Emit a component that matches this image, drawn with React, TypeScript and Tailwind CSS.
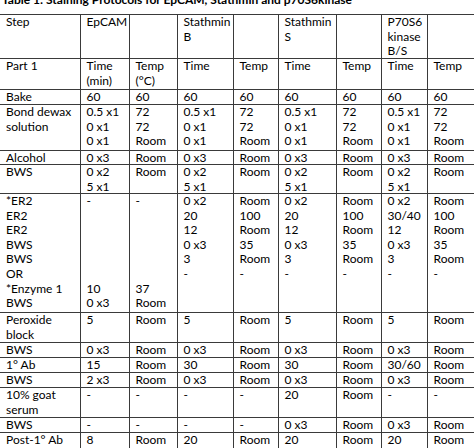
import React from "react";

type Cell = string | string[];
type Row = { h: string; cells: Cell[] };

// h = inner height of the row (row pitch minus the 1px rule)
const rows: Row[] = [
  {
    h: "h-[43px]",
    cells: ["Step", "EpCAM", "", ["Stathmin", "B"], "", ["Stathmin", "S"], "", ["P70S6", "kinase", "B/S"], ""],
  },
  {
    h: "h-[30px]",
    cells: ["Part 1", ["Time", "(min)"], ["Temp", "(°C)"], "Time", "Temp", "Time", "Temp", "Time", "Temp"],
  },
  { h: "h-[14px]", cells: ["Bake", "60", "60", "60", "60", "60", "60", "60", "60"] },
  {
    h: "h-[45px]",
    cells: [
      ["Bond dewax", "solution"],
      ["0.5 x1", "0 x1", "0 x1"],
      ["72", "72", "Room"],
      ["0.5 x1", "0 x1", "0 x1"],
      ["72", "72", "Room"],
      ["0.5 x1", "0 x1", "0 x1"],
      ["72", "72", "Room"],
      ["0.5 x1", "0 x1", "0 x1"],
      ["72", "72", "Room"],
    ],
  },
  { h: "h-[13px]", cells: ["Alcohol", "0 x3", "Room", "0 x3", "Room", "0 x3", "Room", "0 x3", "Room"] },
  {
    h: "h-[28px]",
    cells: ["BWS", ["0 x2", "5 x1"], "Room", ["0 x2", "5 x1"], "Room", ["0 x2", "5 x1"], "Room", ["0 x2", "5 x1"], "Room"],
  },
  {
    h: "h-[118px]",
    cells: [
      ["*ER2", "ER2", "ER2", "BWS", "BWS", "OR", "*Enzyme 1", "BWS"],
      ["-", "", "", "", "", "", "10", "0 x3"],
      ["-", "", "", "", "", "", "37", "Room"],
      ["0 x2", "20", "12", "0 x3", "3", "-"],
      ["Room", "100", "Room", "35", "Room", "-"],
      ["0 x2", "20", "12", "0 x3", "3", "-"],
      ["Room", "100", "Room", "35", "Room", "-"],
      ["0 x2", "30/40", "12", "0 x3", "3", "-"],
      ["Room", "100", "Room", "35", "Room", "-"],
    ],
  },
  { h: "h-[29px]", cells: [["Peroxide", "block"], "5", "Room", "5", "Room", "5", "Room", "5", "Room"] },
  { h: "h-[14px]", cells: ["BWS", "0 x3", "Room", "0 x3", "Room", "0 x3", "Room", "0 x3", "Room"] },
  { h: "h-[14px]", cells: ["1° Ab", "15", "Room", "30", "Room", "30", "Room", "30/60", "Room"] },
  { h: "h-[14px]", cells: ["BWS", "2 x3", "Room", "0 x3", "Room", "0 x3", "Room", "0 x3", "Room"] },
  { h: "h-[29px]", cells: [["10% goat", "serum"], "-", "-", "-", "-", "20", "Room", "-", "-"] },
  { h: "h-[14px]", cells: ["BWS", "-", "-", "-", "-", "0 x3", "Room", "0 x3", "Room"] },
  { h: "h-[15px]", cells: ["Post-1° Ab", "8", "Room", "20", "Room", "20", "Room", "20", "Room"] },
];

const widths = ["w-[80px]", "w-[49px]", "w-[48px]", "w-[56px]", "w-[45px]", "w-[58px]", "w-[45px]", "w-[46px]", "w-[60px]"];

function CellText({ value, h }: { value: Cell; h: string }) {
  const lines = Array.isArray(value) ? value : [value];
  return (
    <div className={h}>
      {lines.map((l, i) => (
        <div key={i} className="h-[14.6px] leading-[14.6px] whitespace-nowrap">
          {l === "" ? "\u00a0" : l}
        </div>
      ))}
    </div>
  );
}

export default function App() {
  return (
    <div className="w-[474px] h-[448px] overflow-hidden bg-white text-black font-['Lato','Open_Sans',sans-serif]">
      <div className="-mt-[7px] h-[14px] pl-[2px] text-[12px] leading-[14px] font-bold whitespace-nowrap">
        Table 1: Staining Protocols for EpCAM, Stathmin and p70S6kinase
      </div>
      <table className="mt-[7px] table-fixed border-collapse text-[12px] w-[487px]">
        <colgroup>
          {widths.map((w, i) => (
            <col key={i} className={w} />
          ))}
        </colgroup>
        <tbody>
          {rows.map((r, ri) => (
            <tr key={ri}>
              {r.cells.map((c, ci) => (
                <td
                  key={ci}
                  className={
                    "align-top p-0 pl-[6px] border-[#3a3a3a] border-t border-b " +
                    (ci === 0 ? "border-l-0 " : "border-l ") +
                    "border-r"
                  }
                >
                  <CellText value={c} h={r.h} />
                </td>
              ))}
            </tr>
          ))}
        </tbody>
      </table>
    </div>
  );
}
